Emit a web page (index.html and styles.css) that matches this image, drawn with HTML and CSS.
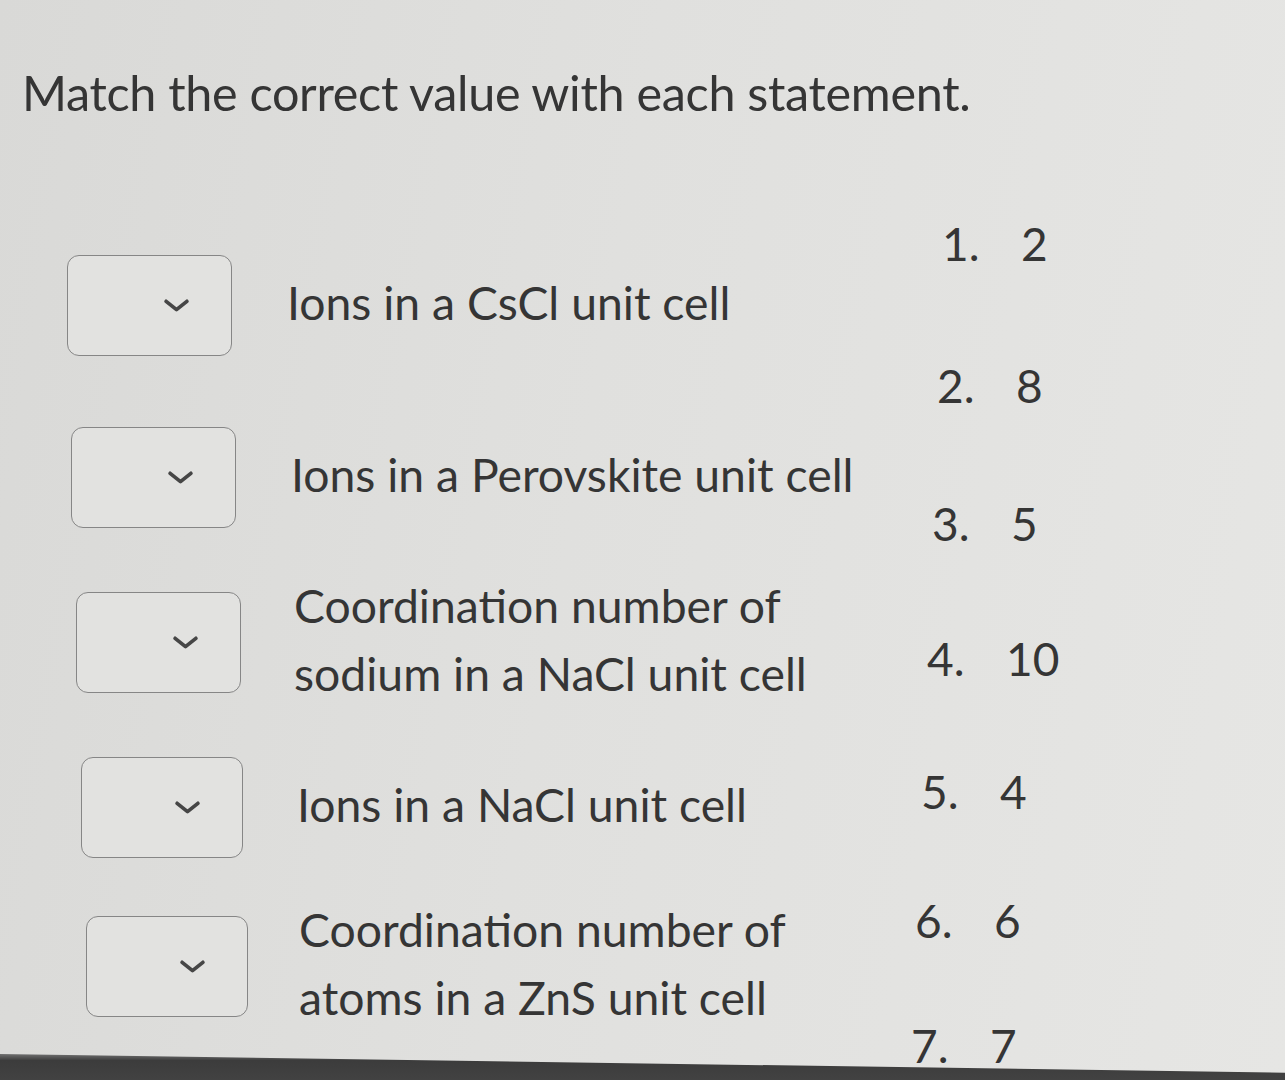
FILE: index.html
```html
<!DOCTYPE html>
<html lang="en">
<head>
<meta charset="utf-8">
<title>Matching question</title>
<link rel="stylesheet" href="styles.css">
</head>
<body>
<main class="page">
  <h1 class="prompt">Match the correct value with each statement.</h1>
  <div class="quiz">
    <div class="statements">
      <div class="row">
        <div class="select"><svg class="chev" viewBox="0 0 26 14"><path d="M3 3 L13 11 L23 3"/></svg></div>
        <p class="text">Ions in a CsCl unit cell</p>
      </div>
      <div class="row">
        <div class="select"><svg class="chev" viewBox="0 0 26 14"><path d="M3 3 L13 11 L23 3"/></svg></div>
        <p class="text">Ions in a Perovskite unit cell</p>
      </div>
      <div class="row">
        <div class="select"><svg class="chev" viewBox="0 0 26 14"><path d="M3 3 L13 11 L23 3"/></svg></div>
        <p class="text">Coordination number of<br>sodium in a NaCl unit cell</p>
      </div>
      <div class="row">
        <div class="select"><svg class="chev" viewBox="0 0 26 14"><path d="M3 3 L13 11 L23 3"/></svg></div>
        <p class="text">Ions in a NaCl unit cell</p>
      </div>
      <div class="row">
        <div class="select"><svg class="chev" viewBox="0 0 26 14"><path d="M3 3 L13 11 L23 3"/></svg></div>
        <p class="text">Coordination number of<br>atoms in a ZnS unit cell</p>
      </div>
    </div>
    <ol class="values">
      <li><span class="n">1.</span><span class="v">2</span></li>
      <li><span class="n">2.</span><span class="v">8</span></li>
      <li><span class="n">3.</span><span class="v">5</span></li>
      <li><span class="n">4.</span><span class="v">10</span></li>
      <li><span class="n">5.</span><span class="v">4</span></li>
      <li><span class="n">6.</span><span class="v">6</span></li>
      <li><span class="n">7.</span><span class="v">7</span></li>
    </ol>
  </div>
</main>
<div class="bezel"></div>
</body>
</html>
```
FILE: styles.css
```css
html, body {
  margin: 0;
  padding: 0;
  height: 100%;
  overflow: hidden;
}

body {
  position: relative;
  font-family: Lato, "Open Sans", sans-serif;
  color: #353535;
  background: linear-gradient(100deg, #d9d9d7 0%, #e0e0de 45%, #e6e6e4 100%);
}

.page {
  padding: 0 0 0 22px;
}

.prompt {
  margin: 0;
  padding-top: 60px;
  font-size: 48.5px;
  font-weight: 400;
  line-height: 64px;
  letter-spacing: -0.3px;
}

.quiz {
  display: flex;
  align-items: flex-start;
}

/* statement column: the view is photographed at a slight angle,
   so each row sits a little further right than the one above */
.statements {
  display: flex;
  flex-direction: column;
  padding-top: 131px;
  padding-left: 45px;
  width: 860px;
}

.row {
  display: flex;
  align-items: center;
  height: 101px;
  gap: 55px;
}

.row:nth-child(2) { margin-top: 71px; padding-left: 4px; gap: 55px; }
.row:nth-child(3) { margin-top: 64px; padding-left: 9px; gap: 53px; }
.row:nth-child(4) { margin-top: 64px; padding-left: 14px; gap: 54px; }
.row:nth-child(5) { margin-top: 58px; padding-left: 19px; gap: 51px; }

.select {
  flex: none;
  width: 165px;
  height: 101px;
  box-sizing: border-box;
  border: 1.6px solid #868686;
  border-radius: 12px;
  background: #e2e2e0;
  display: flex;
  align-items: center;
  justify-content: flex-end;
  padding-right: 41px;
}

.row:nth-child(4) .select,
.row:nth-child(5) .select { width: 162px; }

.chev {
  width: 27px;
  height: 15px;
  fill: none;
  stroke: #464646;
  stroke-width: 3.6;
  stroke-linecap: round;
  stroke-linejoin: round;
}

.text {
  margin: 0 0 8px;
  font-size: 46.3px;
  line-height: 68px;
  white-space: nowrap;
}

/* numbered answer list, drifting left toward the bottom */
.values {
  list-style: none;
  margin: 0;
  padding: 0;
  padding-top: 88px;
  margin-left: -1px;
  font-size: 46px;
}

.values li {
  display: flex;
  line-height: 64px;
}

.values li:nth-child(1) { height: 142px; padding-left: 16px; }
.values li:nth-child(2) { height: 138px; padding-left: 11px; }
.values li:nth-child(3) { height: 135px; padding-left: 6px; }
.values li:nth-child(4) { height: 133px; padding-left: 1px; }
.values li:nth-child(5) { height: 129px; padding-left: 0; margin-left: -5px; }
.values li:nth-child(6) { height: 125px; margin-left: -11px; }
.values li:nth-child(7) { height: 64px; margin-left: -15px; }

.values .n {
  width: 79px;
}

.bezel {
  position: absolute;
  left: 0;
  right: 0;
  bottom: 0;
  height: 26px;
  background: linear-gradient(180deg, #707070 0%, #3c3c3c 25%, #424242 100%);
  clip-path: polygon(0 0, 100% 72%, 100% 100%, 0 100%);
}
```
